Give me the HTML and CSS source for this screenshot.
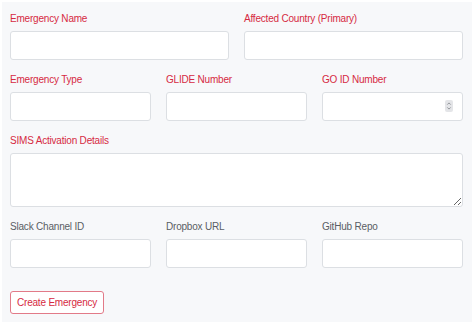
FILE: index.html
```html
<!DOCTYPE html>
<html lang="en">

<head>
    <meta charset="UTF-8">
    <meta name="viewport" content="width=device-width, initial-scale=1.0">
    <title>Create Emergency</title>
    <link rel="stylesheet" href="styles.css">
</head>

<body>
    <form class="panel">

        <div class="row row-2">
            <div class="field">
                <label class="required" for="name">Emergency Name</label>
                <input type="text" id="name">
            </div>
            <div class="field">
                <label class="required" for="country">Affected Country (Primary)</label>
                <input type="text" id="country">
            </div>
        </div>

        <div class="row row-3">
            <div class="field">
                <label class="required" for="type">Emergency Type</label>
                <input type="text" id="type">
            </div>
            <div class="field">
                <label class="required" for="glide">GLIDE Number</label>
                <input type="text" id="glide">
            </div>
            <div class="field">
                <label class="required" for="goid">GO ID Number</label>
                <div class="number-wrap">
                    <input type="number" id="goid">
                    <svg class="spinner" width="8" height="12" viewBox="0 0 8 12">
                        <rect x="0" y="0" width="8" height="12" rx="2" fill="#e4e5e8" />
                        <path d="M2.3 4.6 L4 2.9 L5.7 4.6" fill="none" stroke="#8a8d92" stroke-width="0.9" />
                        <path d="M2.3 7.4 L4 9.1 L5.7 7.4" fill="none" stroke="#8a8d92" stroke-width="0.9" />
                    </svg>
                </div>
            </div>
        </div>

        <div class="row">
            <div class="field">
                <label class="required" for="sims">SIMS Activation Details</label>
                <textarea id="sims"></textarea>
            </div>
        </div>

        <div class="row row-3">
            <div class="field">
                <label for="slack">Slack Channel ID</label>
                <input type="text" id="slack">
            </div>
            <div class="field">
                <label for="dropbox">Dropbox URL</label>
                <input type="text" id="dropbox">
            </div>
            <div class="field">
                <label for="github">GitHub Repo</label>
                <input type="text" id="github">
            </div>
        </div>

        <button type="button" class="btn">Create Emergency</button>

    </form>
</body>

</html>
```

FILE: styles.css
```css
body {
    margin: 0;
    background-color: #ffffff;
    font-family: "Liberation Sans", Arial, sans-serif;
}

.panel {
    margin: 2px;
    height: 311px;
    padding: 9px 9px 0 8px;
    background-color: #f7f8fa;
}

.row {
    display: grid;
    column-gap: 15px;
    margin-bottom: 12px;
}

.row-2 {
    grid-template-columns: 1fr 1fr;
}

.row-3 {
    grid-template-columns: 1fr 1fr 1fr;
}

.field {
    display: flex;
    flex-direction: column;
}

.field label {
    font-size: 10px;
    line-height: 16px;
    letter-spacing: -0.2px;
    margin-bottom: 4px;
    color: #5a5e64;
}

.field label.required {
    color: #d62a42;
}

.field input,
.field textarea {
    box-sizing: border-box;
    width: 100%;
    height: 29px;
    margin: 0;
    border: 1px solid #dcdfe3;
    border-radius: 3px;
    background: #ffffff;
    font-family: inherit;
}

.field textarea {
    height: 54px;
    resize: vertical;
}

.number-wrap {
    position: relative;
}

.number-wrap input {
    -moz-appearance: textfield;
}

.number-wrap input::-webkit-inner-spin-button,
.number-wrap input::-webkit-outer-spin-button {
    -webkit-appearance: none;
    margin: 0;
}

.spinner {
    position: absolute;
    right: 10px;
    top: 8px;
}

.btn {
    margin-top: 11px;
    height: 23px;
    padding: 0 6px;
    background: #ffffff;
    color: #d62a42;
    border: 1px solid #e27a88;
    border-radius: 3px;
    font-family: inherit;
    font-size: 10px;
    letter-spacing: -0.2px;
    cursor: pointer;
}
```
